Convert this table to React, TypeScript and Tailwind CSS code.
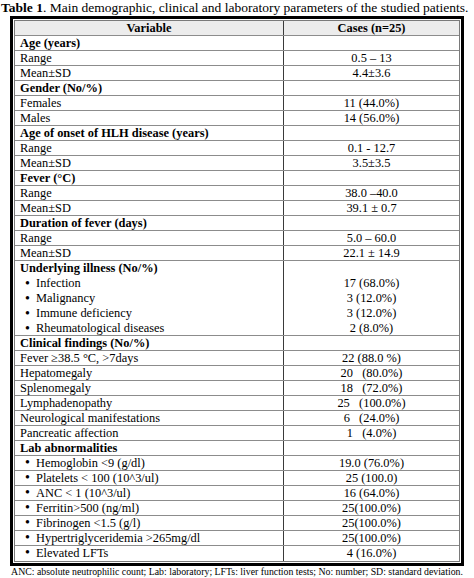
type Row =
  | { kind: 'group'; label: string }
  | { kind: 'item'; label: string; value: string; bullet?: boolean }
  | { kind: 'list'; label: string; items: { label: string; value: string }[] };

const rows: Row[] = [
  { kind: 'group', label: 'Age (years)' },
  { kind: 'item', label: 'Range', value: '0.5 – 13' },
  { kind: 'item', label: 'Mean±SD', value: '4.4±3.6' },
  { kind: 'group', label: 'Gender (No/%)' },
  { kind: 'item', label: 'Females', value: '11 (44.0%)' },
  { kind: 'item', label: 'Males', value: '14 (56.0%)' },
  { kind: 'group', label: 'Age of onset of HLH disease (years)' },
  { kind: 'item', label: 'Range', value: '0.1 - 12.7' },
  { kind: 'item', label: 'Mean±SD', value: '3.5±3.5' },
  { kind: 'group', label: 'Fever (°C)' },
  { kind: 'item', label: 'Range', value: '38.0 –40.0' },
  { kind: 'item', label: 'Mean±SD', value: '39.1 ± 0.7' },
  { kind: 'group', label: 'Duration of fever (days)' },
  { kind: 'item', label: 'Range', value: '5.0 – 60.0' },
  { kind: 'item', label: 'Mean±SD', value: '22.1 ± 14.9' },
  {
    kind: 'list',
    label: 'Underlying illness (No/%)',
    items: [
      { label: 'Infection', value: '17 (68.0%)' },
      { label: 'Malignancy', value: '3 (12.0%)' },
      { label: 'Immune deficiency', value: '3 (12.0%)' },
      { label: 'Rheumatological diseases', value: '2 (8.0%)' },
    ],
  },
  { kind: 'group', label: 'Clinical findings (No/%)' },
  { kind: 'item', label: 'Fever ≥38.5 °C, >7days', value: '22 (88.0 %)' },
  { kind: 'item', label: 'Hepatomegaly', value: '20   (80.0%)' },
  { kind: 'item', label: 'Splenomegaly', value: '18   (72.0%)' },
  { kind: 'item', label: 'Lymphadenopathy', value: '25   (100.0%)' },
  { kind: 'item', label: 'Neurological manifestations', value: '6   (24.0%)' },
  { kind: 'item', label: 'Pancreatic affection', value: '1   (4.0%)' },
  { kind: 'group', label: 'Lab abnormalities' },
  { kind: 'item', bullet: true, label: 'Hemoglobin <9 (g/dl)', value: '19.0 (76.0%)' },
  { kind: 'item', bullet: true, label: 'Platelets < 100 (10^3/ul)', value: '25 (100.0)' },
  { kind: 'item', bullet: true, label: 'ANC < 1 (10^3/ul)', value: '16 (64.0%)' },
  { kind: 'item', bullet: true, label: 'Ferritin>500 (ng/ml)', value: '25(100.0%)' },
  { kind: 'item', bullet: true, label: 'Fibrinogen <1.5 (g/l)', value: '25(100.0%)' },
  { kind: 'item', bullet: true, label: 'Hypertriglyceridemia >265mg/dl', value: '25(100.0%)' },
  { kind: 'item', bullet: true, label: 'Elevated LFTs', value: '4 (16.0%)' },
];

const Bullet = ({ text, h }: { text: string; h: string }) => (
  <div className={`flex items-center ${h}`}>
    <span className="w-[21px] pl-[10px] text-[14px] leading-none">•</span>
    <span>{text}</span>
  </div>
);

const TableRow = ({ row, last }: { row: Row; last: boolean }) => {
  const line = last ? '' : 'border-b border-[#8c8c8c]';
  if (row.kind === 'group') {
    return (
      <div className={`flex h-[15px] ${line}`}>
        <div className="w-[269px] border-r border-[#3a3a3a] pl-[5px] font-bold leading-[14px]">{row.label}</div>
        <div className="flex-1" />
      </div>
    );
  }
  if (row.kind === 'list') {
    return (
      <div className={`flex h-[75px] ${line}`}>
        <div className="w-[269px] border-r border-[#3a3a3a]">
          <div className="h-[15px] pl-[5px] font-bold leading-[14px]">{row.label}</div>
          {row.items.map((it) => (
            <Bullet key={it.label} text={it.label} h="h-[15px]" />
          ))}
        </div>
        <div className="flex-1 pt-[15px] text-center">
          {row.items.map((it) => (
            <div key={it.label} className="h-[15px] leading-[15px]">{it.value}</div>
          ))}
        </div>
      </div>
    );
  }
  return (
    <div className={`flex h-[15px] ${line}`}>
      <div className="w-[269px] border-r border-[#3a3a3a] leading-[14px]">
        {row.bullet ? <Bullet text={row.label} h="h-[14px]" /> : <div className="pl-[5px]">{row.label}</div>}
      </div>
      <div className="flex-1 whitespace-pre text-center leading-[14px]">{row.value}</div>
    </div>
  );
};

export default function App() {
  return (
    <div className="h-[578px] w-[474px] overflow-hidden bg-white text-black" style={{ fontFamily: '"Liberation Serif", "Times New Roman", serif' }}>
      <div className="whitespace-nowrap pl-[1px] text-[13.5px] leading-[16px]">
        <span className="font-bold">Table 1</span>. Main demographic, clinical and laboratory parameters of the studied patients.
      </div>
      <div className="ml-[10px] w-[454px] border-[3px] border-black p-px">
        <div className="border border-[#7a7a7a] text-[12.4px]">
          <div className="flex h-[15px] border-b border-[#8c8c8c] bg-[#ececec] font-bold">
            <div className="w-[269px] border-r border-[#3a3a3a] text-center leading-[14px]">Variable</div>
            <div className="flex-1 text-center leading-[14px]">Cases (n=25)</div>
          </div>
          {rows.map((r, i) => (
            <TableRow key={i} row={r} last={i === rows.length - 1} />
          ))}
        </div>
      </div>
      <div className="whitespace-nowrap text-center text-[9.8px] leading-[12px]">
        ANC: absolute neutrophilic count; Lab: laboratory; LFTs: liver function tests; No: number; SD: standard deviation.
      </div>
    </div>
  );
}
